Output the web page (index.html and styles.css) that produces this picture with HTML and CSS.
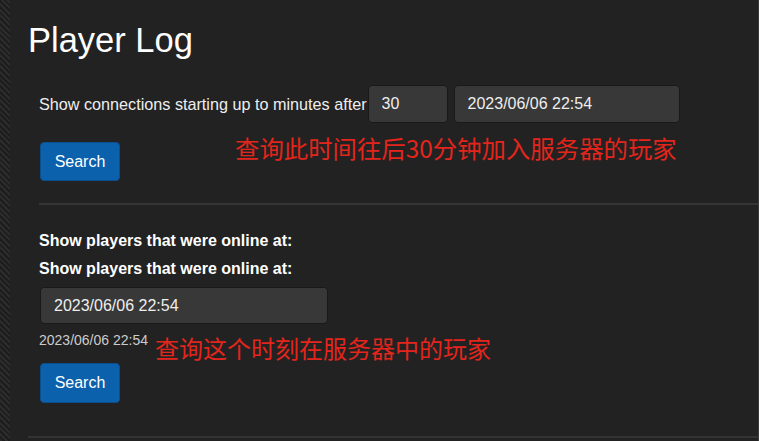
FILE: index.html
```html
<!DOCTYPE html>
<html lang="en">
<head>
<meta charset="utf-8">
<title>Player Log</title>
<link rel="stylesheet" href="styles.css">
</head>
<body>
<div class="page">
  <div class="strip"></div>
  <main class="main">
    <h1 class="title">Player Log</h1>
    <section class="section first">
      <div class="row-inputs">
        <label class="label">Show connections starting up to minutes after</label>
        <input class="field field-min" type="text" value="30">
        <input class="field field-date" type="text" value="2023/06/06 22:54">
      </div>
      <div class="row-button">
        <button class="btn">Search</button>
        <span class="note note-1">查询此时间往后30分钟加入服务器的玩家</span>
      </div>
    </section>
    <hr class="divider">
    <section class="section second">
      <div class="bold-label">Show players that were online at:</div>
      <div class="bold-label">Show players that were online at:</div>
      <input class="field field-online" type="text" value="2023/06/06 22:54">
      <div class="row-hint">
        <span class="hint">2023/06/06 22:54</span>
        <span class="note note-2">查询这个时刻在服务器中的玩家</span>
      </div>
      <button class="btn btn-tall">Search</button>
    </section>
    <hr class="divider bottom">
  </main>
</div>
</body>
</html>
```
FILE: styles.css
```css
html, body {
  margin: 0;
  padding: 0;
  height: 100%;
  background: #222222;
  font-family: "Liberation Sans", Arial, sans-serif;
  color: #eeeeee;
}
.page {
  display: flex;
  height: 441px;
  overflow: hidden;
  border-right: 1px solid #3a3a3a;
  box-sizing: border-box;
}
.strip {
  width: 10px;
  flex: none;
  background: repeating-linear-gradient(45deg, #2c2c2c 0 2px, #1d1d1d 2px 4px);
}
.main {
  flex: 1;
  display: flex;
  flex-direction: column;
  padding-left: 18px;
}
.title {
  margin: 21px 0 0;
  font-size: 34.5px;
  line-height: 39px;
  font-weight: normal;
  color: #ffffff;
}
.section {
  display: flex;
  flex-direction: column;
  padding-left: 11px;
}
.section.first {
  margin-top: 25px;
}
.row-inputs {
  display: flex;
  align-items: center;
  height: 38px;
}
.label {
  font-size: 16.2px;
  color: #eeeeee;
  margin-right: 1px;
}
.field {
  box-sizing: border-box;
  height: 38px;
  background: #383838;
  border: 1px solid #191919;
  border-radius: 4px;
  color: #eeeeee;
  font-family: "Liberation Sans", Arial, sans-serif;
  font-size: 16px;
  padding: 0 13px;
  outline: none;
}
.field-min {
  width: 80px;
}
.field-date {
  width: 226px;
  margin-left: 6px;
}
.row-button {
  display: flex;
  align-items: flex-start;
  margin-top: 19px;
}
.btn {
  box-sizing: border-box;
  width: 80px;
  height: 39px;
  margin-left: 1px;
  background: #0c61ad;
  border: 1px solid #0a4f8e;
  border-radius: 4px;
  color: #ffffff;
  font-family: "Liberation Sans", Arial, sans-serif;
  font-size: 16px;
  padding: 0;
}
.btn-tall {
  height: 40px;
}
.note {
  color: #e3251c;
  font-family: "Noto Sans CJK SC", sans-serif;
  font-size: 24px;
  line-height: 28px;
  white-space: nowrap;
}
.note-1 {
  margin-left: 115px;
  margin-top: -8px;
  font-size: 24.4px;
}
.divider {
  border: 0;
  height: 2px;
  background: #353535;
  margin: 22px 0 0 11px;
}
.second {
  margin-top: 27px;
}
.bold-label {
  font-size: 16px;
  font-weight: bold;
  line-height: 18px;
  color: #ffffff;
  margin-bottom: 10px;
}
.field-online {
  width: 288px;
  height: 37px;
  margin-left: 1px;
  margin-top: -1px;
}
.row-hint {
  display: flex;
  align-items: flex-start;
  height: 39px;
}
.hint {
  font-size: 14px;
  color: #cccccc;
  margin-top: 8px;
}
.note-2 {
  margin-left: 7px;
  margin-top: 10px;
}
.divider.bottom {
  margin: 33px 0 0 0;
  background: #333333;
}
```
